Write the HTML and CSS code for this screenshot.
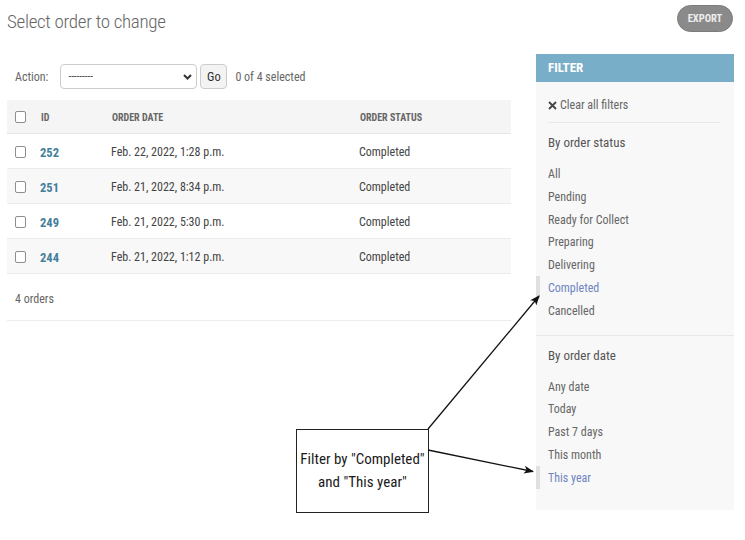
FILE: index.html
```html
<!DOCTYPE html>
<html lang="en">
<head>
<meta charset="utf-8">
<title>Select order to change</title>
<link rel="stylesheet" href="styles.css">
</head>
<body>
<div class="page">
  <div class="topbar">
    <h1 class="title">Select order to change</h1>
    <a class="export-btn">Export</a>
  </div>
  <div class="content">
    <div class="changelist">
      <div class="actions">
        <span class="action-label">Action:</span>
        <div class="select">
          <span class="select-value">---------</span>
          <svg class="chevron" width="9" height="6" viewBox="0 0 9 6"><path d="M1 1 L4.5 4.5 L8 1" fill="none" stroke="#333" stroke-width="2"/></svg>
        </div>
        <button class="go-btn">Go</button>
        <span class="counter">0 of 4 selected</span>
      </div>
      <div class="results">
        <div class="row head">
          <span class="cb"></span><span>ID</span><span>Order date</span><span>Order status</span>
        </div>
        <div class="row">
          <span class="cb"></span><a class="id">252</a><span>Feb. 22, 2022, 1:28 p.m.</span><span>Completed</span>
        </div>
        <div class="row alt">
          <span class="cb"></span><a class="id">251</a><span>Feb. 21, 2022, 8:34 p.m.</span><span>Completed</span>
        </div>
        <div class="row">
          <span class="cb"></span><a class="id">249</a><span>Feb. 21, 2022, 5:30 p.m.</span><span>Completed</span>
        </div>
        <div class="row alt">
          <span class="cb"></span><a class="id">244</a><span>Feb. 21, 2022, 1:12 p.m.</span><span>Completed</span>
        </div>
      </div>
      <p class="paginator">4 orders</p>
    </div>
    <aside class="filter">
      <h2 class="filter-title">Filter</h2>
      <div class="filter-clear">
        <svg width="9" height="9" viewBox="0 0 9 9"><path d="M1 1 L8 8 M8 1 L1 8" stroke="#444" stroke-width="1.8"/></svg>
        <span>Clear all filters</span>
      </div>
      <h3>By order status</h3>
      <ul>
        <li>All</li>
        <li>Pending</li>
        <li>Ready for Collect</li>
        <li>Preparing</li>
        <li>Delivering</li>
        <li class="selected">Completed</li>
        <li>Cancelled</li>
      </ul>
      <h3>By order date</h3>
      <ul>
        <li>Any date</li>
        <li>Today</li>
        <li>Past 7 days</li>
        <li>This month</li>
        <li class="selected">This year</li>
      </ul>
    </aside>
  </div>
  <div class="callout">Filter by "Completed"<br>and "This year"</div>
  <svg class="arrows" width="745" height="540" viewBox="0 0 745 540">
    <defs>
      <marker id="ah" markerWidth="10" markerHeight="8" refX="9" refY="4" orient="auto" markerUnits="userSpaceOnUse">
        <path d="M0,0 L10,4 L0,8 L2.5,4 Z" fill="#111"/>
      </marker>
    </defs>
    <line x1="428" y1="429" x2="539" y2="296" stroke="#111" stroke-width="1.3" marker-end="url(#ah)"/>
    <line x1="428" y1="450" x2="533" y2="471.5" stroke="#111" stroke-width="1.3" marker-end="url(#ah)"/>
  </svg>
</div>
</body>
</html>
```

FILE: styles.css
```css
* { box-sizing: border-box; }
html, body { margin: 0; padding: 0; background: #fff; }
body {
  font-family: "Roboto Condensed", "Roboto", "Liberation Sans", sans-serif;
  font-size: 12px;
  color: #333;
}
.page {
  position: relative;
  width: 745px;
  height: 540px;
  padding: 0 11px 0 7px;
  overflow: hidden;
}
.topbar {
  display: flex;
  justify-content: space-between;
  align-items: flex-start;
  height: 54px;
  padding-top: 5px;
}
.title {
  margin: 5px 0 0;
  font-size: 19px;
  line-height: 24px;
  font-weight: 300;
  letter-spacing: -0.3px;
  color: #666;
}
.export-btn {
  display: inline-flex;
  align-items: center;
  justify-content: center;
  width: 56px;
  height: 27px;
  margin-right: 1px;
  border-radius: 14px;
  background: #8a8a8a;
  border: 1px solid #7c7c7c;
  color: #eeeeee;
  font-size: 10.5px;
  font-weight: bold;
  text-transform: uppercase;
}
.content {
  display: flex;
  gap: 25px;
  align-items: flex-start;
}
.changelist { flex: 1; padding-top: 10px; }
.actions {
  display: flex;
  align-items: center;
  height: 25px;
  padding-left: 8px;
  color: #666;
}
.action-label { margin-right: 12px; }
.select {
  display: flex;
  align-items: center;
  justify-content: space-between;
  width: 137px;
  height: 25px;
  padding: 0 4px 0 7px;
  border: 1px solid #cccccc;
  border-radius: 4px;
  background: #fff;
  color: #333;
  font-size: 11px;
}
.go-btn {
  width: 27px;
  height: 25px;
  margin-left: 3px;
  padding: 0;
  border: 1px solid #cccccc;
  border-radius: 4px;
  background: #f3f3f3;
  color: #333;
  font-family: inherit;
  font-size: 12.5px;
}
.counter { margin-left: 8px; color: #666; }
.results { margin-top: 11px; }
.row {
  display: grid;
  grid-template-columns: 25px 71px 248px 1fr;
  align-items: center;
  height: 35px;
  padding: 2px 0 0 8px;
  border-bottom: 1px solid #ececec;
  color: #444;
}
.row.head {
  height: 34px;
  background: #f5f5f5;
  border-bottom: 1px solid #e6e6e6;
  color: #666;
  font-size: 10px;
  font-weight: bold;
  text-transform: uppercase;
}
.row.head span:nth-child(n+2) { padding-left: 1px; }
.row.alt { background: #f8f8f8; }
.cb {
  display: block;
  width: 11px;
  height: 12px;
  margin-top: -1px;
  border: 1px solid #8e8e8e;
  border-radius: 2px;
  background: #fff;
}
.id { color: #447e9b; font-weight: bold; font-size: 12.5px; }
.paginator {
  margin: 0;
  height: 47px;
  padding: 3px 0 0 8px;
  line-height: 44px;
  color: #666;
  border-bottom: 1px solid #ececec;
}
.filter {
  width: 198px;
  height: 456px;
  background: #f8f8f8;
  color: #666;
}
.filter-title {
  margin: 0;
  height: 28px;
  padding-left: 12px;
  line-height: 28px;
  background: #79aec8;
  color: #fff;
  font-size: 13px;
  font-weight: bold;
  text-transform: uppercase;
}
.filter-clear {
  display: flex;
  align-items: center;
  gap: 3px;
  margin: 0 14px 0 12px;
  padding: 14px 0 8px;
  line-height: 18px;
  border-bottom: 1px solid #e8e8e8;
}
.filter h3 {
  margin: 11px 12px 0;
  font-size: 13px;
  line-height: 18px;
  font-weight: normal;
  color: #555;
}
.filter ul {
  list-style: none;
  margin: 0;
  padding: 10px 12px 13px;
  border-bottom: 1px solid #e8e8e8;
}
.filter ul:last-child { border-bottom: none; }
.filter li { line-height: 22.8px; height: 22.8px; padding-top: 1px; }
.filter li.selected {
  margin-left: -12px;
  padding-left: 8px;
  border-left: 4px solid #e0e0e0;
  color: #6f84c0;
}
.callout {
  position: absolute;
  left: 296px;
  top: 429px;
  width: 133px;
  height: 84px;
  display: flex;
  align-items: center;
  justify-content: center;
  text-align: center;
  white-space: nowrap;
  border: 1.3px solid #222;
  background: #fff;
  color: #1a1a1a;
  font-size: 15px;
  line-height: 23px;
}
.arrows {
  position: absolute;
  left: 0;
  top: 0;
  pointer-events: none;
}
```
